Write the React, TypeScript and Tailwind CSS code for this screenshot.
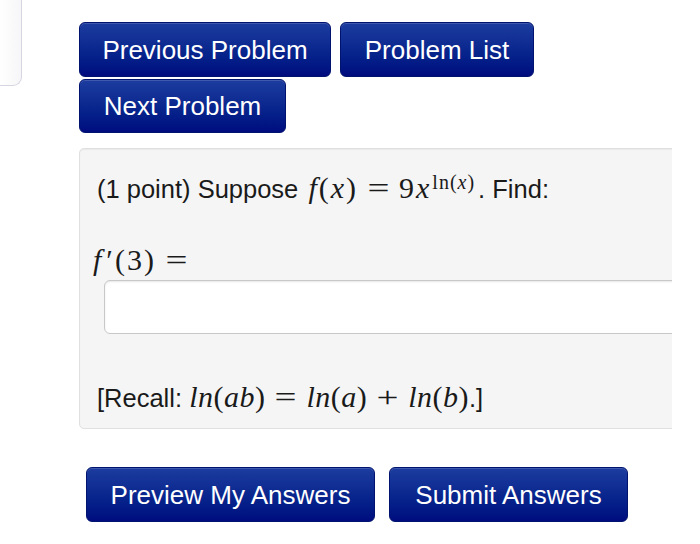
const navy =
  'rounded-[6px] border border-[#00136e] bg-gradient-to-b from-[#1d3c9f] to-[#000b7e] text-white text-[26px] leading-none shadow-[inset_0_1px_0_rgba(255,255,255,0.15)]';

const serif = "font-['Liberation_Serif','Times_New_Roman',serif]";

function I({ children }: { children: React.ReactNode }) {
  return <span className="italic">{children}</span>;
}

// relation / binary operator with TeX-like spacing
function Op({ children }: { children: React.ReactNode }) {
  return <span className="inline-block mx-[12px] scale-x-[1.3] tracking-normal">{children}</span>;
}

export default function App() {
  return (
    <div className="w-[700px] h-[544px] bg-white overflow-hidden font-['Liberation_Sans',Arial,sans-serif] text-[#1a1a1a]">
      <div className="w-[672px] h-[544px] overflow-hidden flex">
        {/* side card, mostly off screen */}
        <div className="w-[22px] h-[86px] shrink-0 rounded-br-[9px] border-r border-b border-[#d6d6e2] bg-gradient-to-r from-white to-[#f6f6f8]" />

        <div className="ml-[57px] pt-[22px] flex flex-col">
          <div className="flex flex-wrap gap-x-[9px] gap-y-[2px] w-[470px]">
            <button className={`${navy} w-[252px] h-[55px]`}>Previous Problem</button>
            <button className={`${navy} w-[194px] h-[55px]`}>Problem List</button>
            <button className={`${navy} w-[207px] h-[54px]`}>Next Problem</button>
          </div>

          <div className="mt-[15px] w-[660px] h-[281px] rounded-[5px] border border-[#e0e0e0] bg-[#f5f5f5] shadow-[inset_0_1px_1px_rgba(0,0,0,0.05)] pl-[17px] pt-[22px]">
            <p className="text-[25.5px] leading-[34px]">
              (1 point) Suppose{' '}
              <span className={`${serif} text-[30px] ml-[3px] tracking-[2px]`}>
                <I>f</I>(<I>x</I>)<Op>=</Op>9<I>x</I>
                <sup className="text-[20px] relative -top-[9px] ml-[1px] tracking-[1px]">
                  ln(<I>x</I>)
                </sup>
              </span>
              <span className="ml-[3px]">. Find:</span>
            </p>

            <p className={`mt-[38px] -ml-[4px] ${serif} text-[30px] leading-[32px] tracking-[2px]`}>
              <I>f</I>
              <span className="ml-[3px]">′</span>(3)<Op>=</Op>
            </p>

            <input
              type="text"
              className="mt-[4px] ml-[7px] block w-[620px] h-[54px] rounded-[6px] border border-[#c8c8c8] bg-white shadow-[inset_0_1px_2px_rgba(0,0,0,0.1)]"
            />

            <p className="mt-[46px] text-[25.5px] leading-[34px]">
              [Recall:{' '}
              <span className={`${serif} text-[30px] tracking-[0.5px]`}>
                <I>ln</I>(<I>ab</I>)<Op>=</Op><I>ln</I>(<I>a</I>)<Op>+</Op><I>ln</I>(<I>b</I>)
              </span>
              .]
            </p>
          </div>

          <div className="mt-[38px] ml-[7px] flex gap-[14px]">
            <button className={`${navy} w-[289px] h-[55px]`}>Preview My Answers</button>
            <button className={`${navy} w-[239px] h-[55px]`}>Submit Answers</button>
          </div>
        </div>
      </div>
    </div>
  );
}
